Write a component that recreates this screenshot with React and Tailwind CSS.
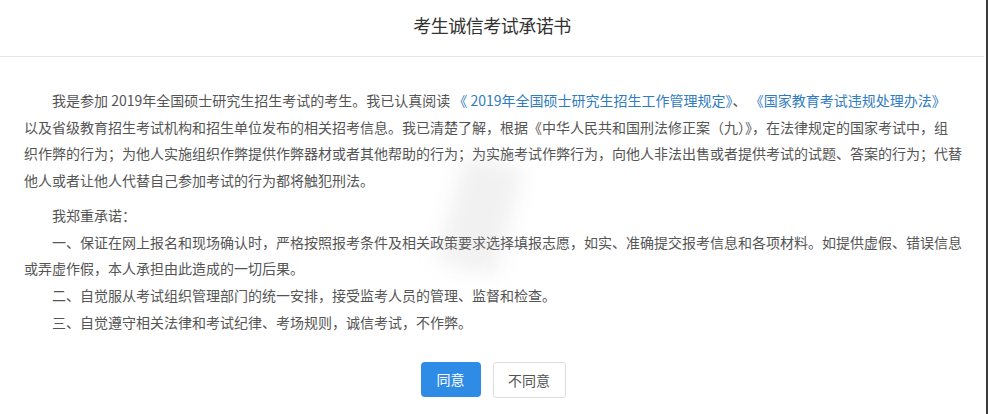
export default function App() {
  const font = { fontFamily: '"Noto Sans CJK SC", "Microsoft YaHei", sans-serif' };

  return (
    <div
      className="relative w-[988px] h-[414px] bg-white border-r-2 border-[#3a3a3a] overflow-hidden"
      style={font}
    >
      {/* header */}
      <div className="h-[57px] flex items-center justify-center pb-[5px] border-b border-[#e6e6e6] mr-[2px]">
        <h1 className="text-[18px] text-[#333] tracking-[-0.5px]">考生诚信考试承诺书</h1>
      </div>

      {/* body */}
      <div className="px-[24px] pt-[30px] text-[14px] leading-[26.7px] text-[#555]">
        <p className="indent-[28px] mb-[8px]">
          我是参加 2019年全国硕士研究生招生考试的考生。我已认真阅读{" "}
          <span className="text-[#2f7cc0]">《 2019年全国硕士研究生招生工作管理规定》</span>、{" "}
          <span className="text-[#2f7cc0]">《国家教育考试违规处理办法》</span>
          <br />
          以及省级教育招生考试机构和招生单位发布的相关招考信息。我已清楚了解，根据《中华人民共和国刑法修正案（九）》，在法律规定的国家考试中，组
          <br />
          织作弊的行为；为他人实施组织作弊提供作弊器材或者其他帮助的行为；为实施考试作弊行为，向他人非法出售或者提供考试的试题、答案的行为；代替
          <br />
          他人或者让他人代替自己参加考试的行为都将触犯刑法。
        </p>
        <p className="indent-[28px]">我郑重承诺：</p>
        <p className="indent-[28px]">
          一、保证在网上报名和现场确认时，严格按照报考条件及相关政策要求选择填报志愿，如实、准确提交报考信息和各项材料。如提供虚假、错误信息
          <br />
          或弄虚作假，本人承担由此造成的一切后果。
        </p>
        <p className="indent-[28px]">二、自觉服从考试组织管理部门的统一安排，接受监考人员的管理、监督和检查。</p>
        <p className="indent-[28px]">三、自觉遵守相关法律和考试纪律、考场规则，诚信考试，不作弊。</p>
      </div>

      {/* buttons */}
      <div className="flex justify-center gap-[12px] mt-[27px]">
        <button className="w-[60px] h-[35px] rounded-[4px] bg-[#2f8ce6] text-white text-[14px]">同意</button>
        <button className="w-[73px] h-[36px] rounded-[3px] border border-[#dedede] bg-white text-[#555] text-[14px]">
          不同意
        </button>
      </div>

      {/* blurred watermark over text */}
      <div className="absolute left-[450px] top-[160px] w-[60px] h-[110px] bg-[#a0a0a0]/15 blur-[10px] rotate-[15deg] pointer-events-none" />
    </div>
  );
}
